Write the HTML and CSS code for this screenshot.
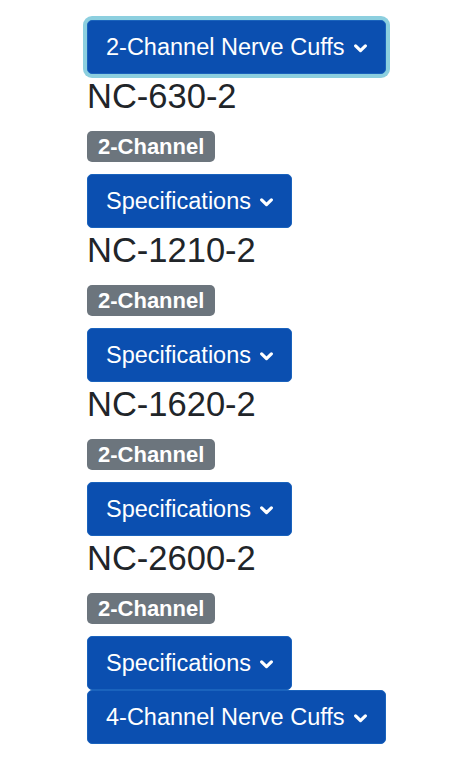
FILE: index.html
```html
<!DOCTYPE html>
<html lang="en">
<head>
    <meta charset="UTF-8">
    <meta name="viewport" content="width=device-width, initial-scale=1.0">
    <title>Nerve Cuffs</title>
    <link rel="stylesheet" href="styles.css">
</head>
<body>

    <div class="catalog">

        <button class="btn btn-focus">2-Channel Nerve Cuffs <svg class="caret" viewBox="0 0 12 8"><polyline points="1.5,1.5 6,6 10.5,1.5"/></svg></button>

        <div class="product">
            <h4 class="product-name">NC-630-2</h4>
            <div class="tags"><span class="badge">2-Channel</span></div>
            <button class="btn">Specifications <svg class="caret" viewBox="0 0 12 8"><polyline points="1.5,1.5 6,6 10.5,1.5"/></svg></button>
        </div>

        <div class="product">
            <h4 class="product-name">NC-1210-2</h4>
            <div class="tags"><span class="badge">2-Channel</span></div>
            <button class="btn">Specifications <svg class="caret" viewBox="0 0 12 8"><polyline points="1.5,1.5 6,6 10.5,1.5"/></svg></button>
        </div>

        <div class="product">
            <h4 class="product-name">NC-1620-2</h4>
            <div class="tags"><span class="badge">2-Channel</span></div>
            <button class="btn">Specifications <svg class="caret" viewBox="0 0 12 8"><polyline points="1.5,1.5 6,6 10.5,1.5"/></svg></button>
        </div>

        <div class="product">
            <h4 class="product-name">NC-2600-2</h4>
            <div class="tags"><span class="badge">2-Channel</span></div>
            <button class="btn">Specifications <svg class="caret" viewBox="0 0 12 8"><polyline points="1.5,1.5 6,6 10.5,1.5"/></svg></button>
        </div>

        <button class="btn">4-Channel Nerve Cuffs <svg class="caret" viewBox="0 0 12 8"><polyline points="1.5,1.5 6,6 10.5,1.5"/></svg></button>

    </div>

</body>
</html>
```

FILE: styles.css
```css
body {
    margin: 0;
    font-family: "Liberation Sans", Arial, sans-serif;
    color: #212529;
    background-color: #fff;
}

.catalog {
    display: flex;
    flex-direction: column;
    align-items: flex-start;
    padding: 20px 0 0 87px;
}

.btn {
    display: inline-flex;
    align-items: center;
    gap: 9px;
    height: 54px;
    padding: 0 18px;
    font-family: inherit;
    font-size: 23.5px;
    color: #fff;
    background-color: #0b4fb0;
    border: 1.5px solid #1a63bd;
    border-radius: 5px;
    cursor: pointer;
}

.btn-focus {
    box-shadow: 0 0 0 4px #8ccfdf;
}

.caret {
    width: 13px;
    height: 9px;
    margin-top: 2px;
    fill: none;
    stroke: #fff;
    stroke-width: 2.9;
    stroke-linecap: round;
    stroke-linejoin: round;
}

.product {
    display: flex;
    flex-direction: column;
    align-items: flex-start;
}

.product-name {
    margin: 0 0 12px;
    font-size: 34.5px;
    font-weight: 400;
    line-height: 45px;
}

.tags {
    margin-bottom: 12px;
}

.badge {
    display: inline-block;
    height: 31px;
    line-height: 31px;
    padding: 0 11px;
    font-size: 22px;
    font-weight: bold;
    color: #fff;
    background-color: #6c757d;
    border-radius: 5px;
}
```
